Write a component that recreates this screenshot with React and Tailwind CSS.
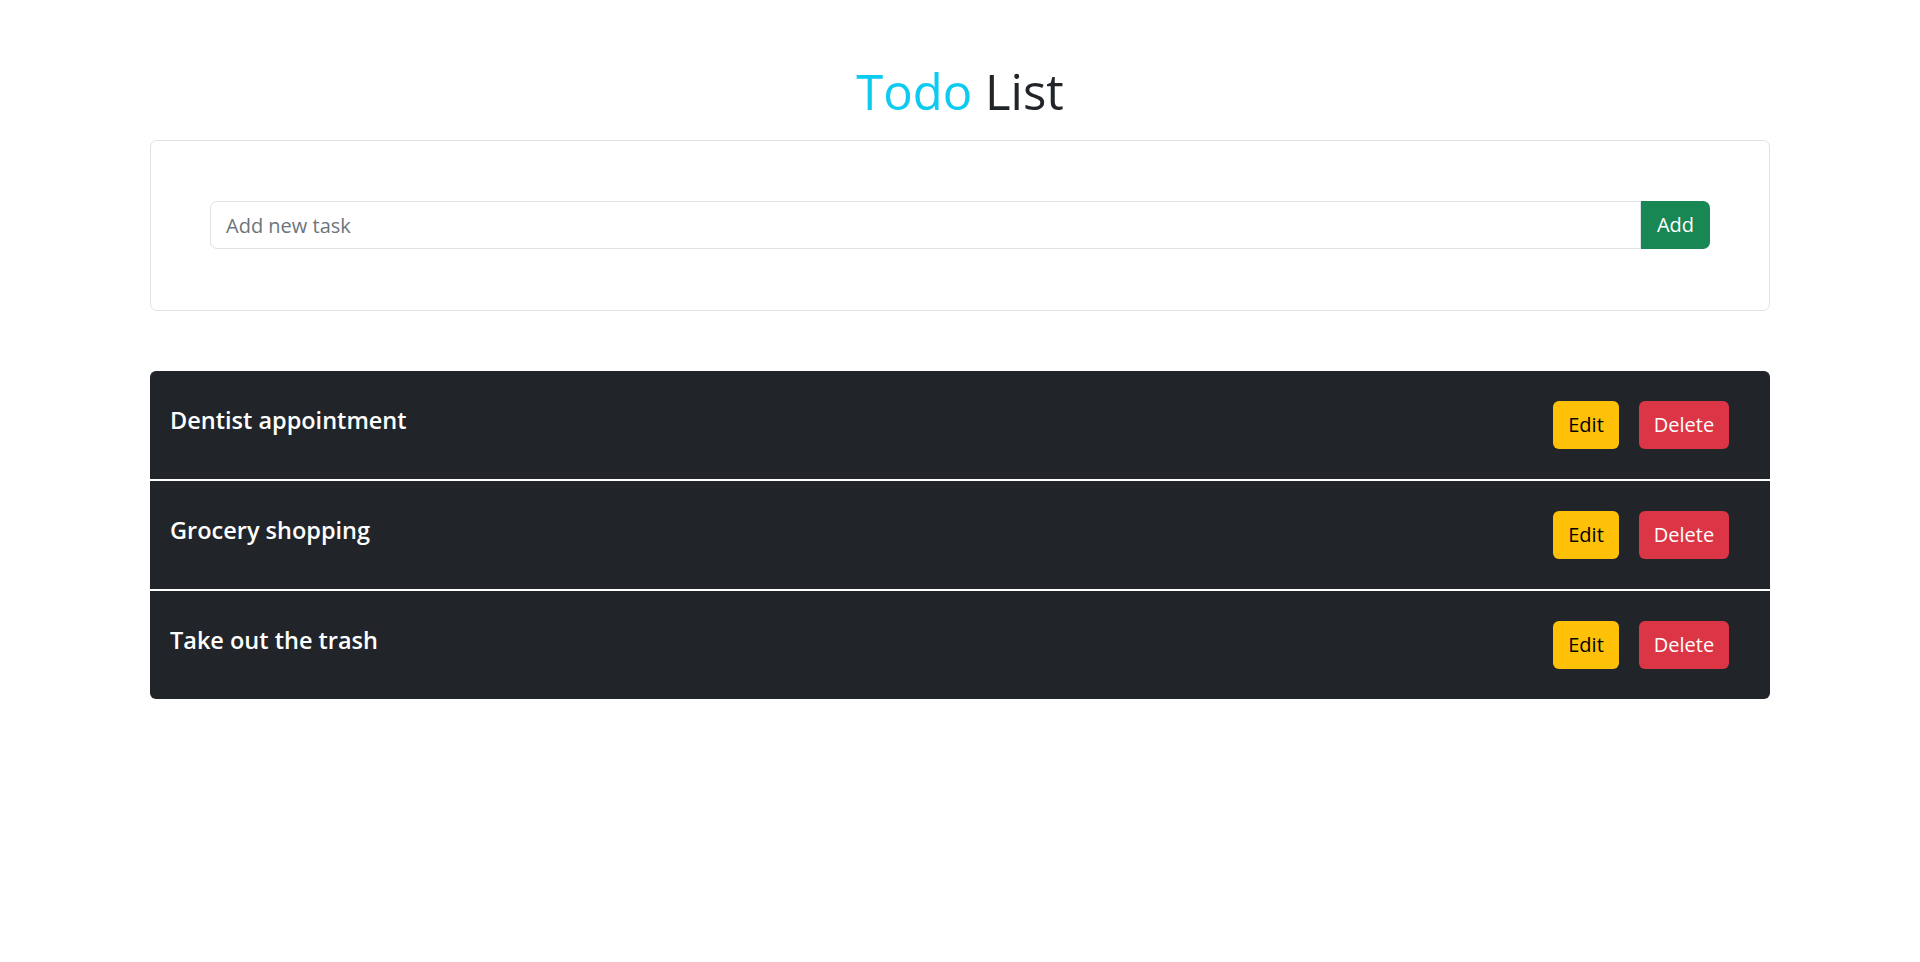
import React, { useState } from 'react';

const font = { fontFamily: '"Open Sans", "Noto Sans", sans-serif' };

export default function App() {
  const [tasks] = useState(['Dentist appointment', 'Grocery shopping', 'Take out the trash']);

  return (
    <div className="min-h-screen bg-white" style={font}>
      <div className="mx-auto w-[1620px]">
        <h1 className="pt-[61px] mb-[19px] text-center text-[49px] leading-[60px] font-medium text-[#212529]">
          <span className="text-[#0dcaf0]">Todo</span> List
        </h1>

        <div className="rounded-[7px] border border-[#dee2e6] pt-[60px] pb-[61px] px-[59px]">
          <div className="flex">
            <input
              type="text"
              placeholder="Add new task"
              className="h-[48px] flex-1 rounded-l-[7px] border border-[#dee2e6] px-[15px] text-[20px] text-[#212529] placeholder:text-[#6c757d] outline-none"
            />
            <button className="h-[48px] w-[69px] rounded-r-[7px] bg-[#198754] text-[20px] text-white">
              Add
            </button>
          </div>
        </div>

        <ul className="mt-[60px] flex flex-col divide-y-2 divide-white overflow-hidden rounded-[6px] bg-[#212529]">
          {tasks.map((task) => (
            <li key={task} className="flex items-center justify-between py-[30px] pl-5 pr-[41px]">
              <h5 className="mb-[10px] text-[23.5px] leading-[30px] font-semibold text-white">{task}</h5>
              <div className="flex gap-5">
                <button className="h-[48px] w-[66px] rounded-[6px] bg-[#ffc107] text-[20px] text-black">Edit</button>
                <button className="h-[48px] w-[90px] rounded-[6px] bg-[#dc3545] text-[20px] text-white">Delete</button>
              </div>
            </li>
          ))}
        </ul>
      </div>
    </div>
  );
}
